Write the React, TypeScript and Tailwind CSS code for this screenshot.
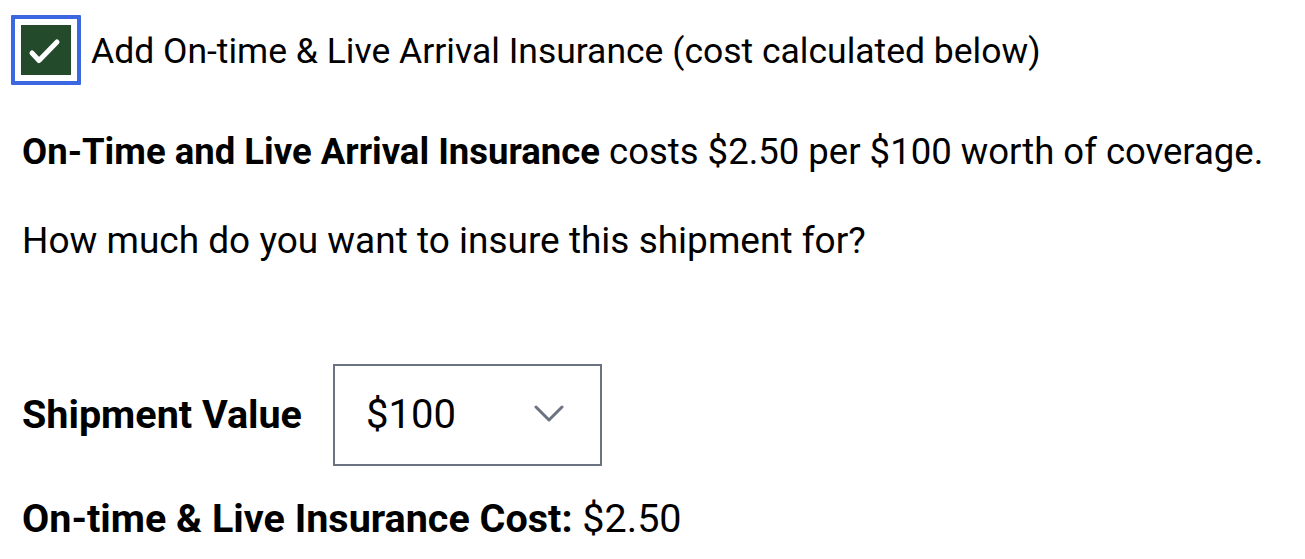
import { useState } from "react";

export default function App() {
  const [checked, setChecked] = useState(true);
  const [value, setValue] = useState("100");
  const cost = (Number(value) * 0.025).toFixed(2);

  return (
    <div className="min-h-screen bg-white pl-[22px] text-black font-['Roboto',sans-serif]">
      {/* Checkbox row */}
      <label className="flex items-center pt-[15px] cursor-pointer">
        <span className="flex h-[70px] w-[70px] -ml-[11px] items-center justify-center rounded-[1px] border-4 border-[#3b68e0]">
          <span
            className="flex h-[50px] w-[50px] items-center justify-center bg-[#224a2b]"
            onClick={() => setChecked(!checked)}
          >
            {checked && (
              <svg width="50" height="50" viewBox="0 0 50 50">
                <path
                  d="M11 28 L18 35.5 L36 17"
                  fill="none"
                  stroke="white"
                  strokeWidth="5"
                  strokeLinecap="round"
                  strokeLinejoin="round"
                />
              </svg>
            )}
          </span>
        </span>
        <span className="ml-[10px] mt-[4px] text-[35.5px] leading-none">
          Add On-time &amp; Live Arrival Insurance (cost calculated below)
        </span>
      </label>

      <p className="mt-[49px] text-[36.5px] leading-none">
        <strong className="font-bold">On-Time and Live Arrival Insurance</strong> costs $2.50 per $100 worth of coverage.
      </p>

      <p className="mt-[51px] text-[37px] leading-none">
        How much do you want to insure this shipment for?
      </p>

      {/* Shipment value */}
      <div className="mt-[105px] flex items-center">
        <span className="w-[311px] text-[39.5px] font-bold leading-none">Shipment Value</span>
        <div className="relative h-[102px] w-[269px] border-2 border-[#6b7280]">
          <select
            value={value}
            onChange={(e) => setValue(e.target.value)}
            className="h-full w-full appearance-none bg-transparent pl-[31px] text-[40px] leading-none outline-none"
          >
            <option value="100">$100</option>
            <option value="200">$200</option>
            <option value="300">$300</option>
            <option value="500">$500</option>
          </select>
          <svg
            className="pointer-events-none absolute right-[36px] top-[38px]"
            width="30"
            height="20"
            viewBox="0 0 30 20"
          >
            <path d="M2 3 L15 16 L28 3" fill="none" stroke="#6b7280" strokeWidth="3" strokeLinecap="round" strokeLinejoin="round" />
          </svg>
        </div>
      </div>

      <p className="mt-[33px] text-[39.5px] leading-none">
        <strong className="font-bold">On-time &amp; Live Insurance Cost:</strong> ${cost}
      </p>
    </div>
  );
}
